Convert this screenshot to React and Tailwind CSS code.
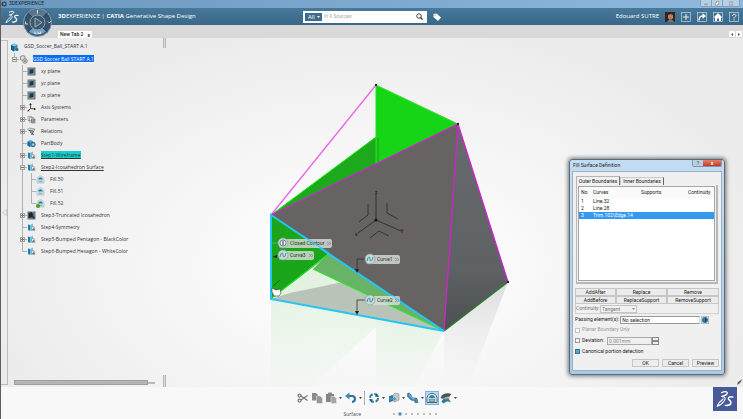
import { useState } from 'react';

const TREE = [
  { label: 'xy plane', icon: 'plane' },
  { label: 'yz plane', icon: 'plane' },
  { label: 'zx plane', icon: 'plane' },
  { label: 'Axis Systems', icon: 'axis', box: '+' },
  { label: 'Parameters', icon: 'params', box: '+' },
  { label: 'Relations', icon: 'relations', box: '+' },
  { label: 'PartBody', icon: 'body' },
  { label: 'Step1-Wireframe', icon: 'set', box: '+', mark: 'bg-[#14cfcb] underline' },
  {
    label: 'Step2-Icosahedron Surface',
    icon: 'set',
    box: '-',
    mark: 'underline',
    children: [
      { label: 'Fill.50', icon: 'fill' },
      { label: 'Fill.51', icon: 'fill' },
      { label: 'Fill.52', icon: 'fillActive' },
    ],
  },
  { label: 'Step3-Truncated Icosahedron', icon: 'setDark', box: '+' },
  { label: 'Step4-Symmetry', icon: 'set' },
  { label: 'Step5-Bumped Pentagon - BlackColor', icon: 'set', box: '+' },
  { label: 'Step6-Bumped Hexagon - WhiteColor', icon: 'set' },
];

const CURVES = [
  { no: 1, name: 'Line.32' },
  { no: 2, name: 'Line.28' },
  { no: 3, name: 'Trim.102\\Edge.14' },
];

const DsLogo = ({ className }) => (
  <svg viewBox="0 0 24 24" className={className} fill="none" stroke="currentColor" strokeLinecap="round" strokeLinejoin="round">
    <path d="M7.500 3.500c4-2 8-1.500 7.500.8-.5 2-4 3.500-7.500 4.200" strokeWidth="1.700" />
    <path d="M9 9c4 0 4 3 1.500 6C8 18.500 4 21 1.500 21.500c1.500-3.500 4.500-7 8-9.500" strokeWidth="1.500" />
    <path d="M22.500 9.500c-3-1-6.500 0-6 2.200.5 2 4 2.800 3.500 5.300-.6 2.600-4 4-7.500 3.500" strokeWidth="2" />
  </svg>
);

const TreeIcon = ({ name }) => (
  <svg viewBox="0 0 18 18" className="size-[9px] shrink-0">
    {(name === 'plane' || name === 'setDark') && (
      <>
        <rect x="1" y="1" width="16" height="16" fill="#6b7378" />
        <rect x="3" y="3" width="12" height="12" fill="#8b959b" />
        <path d="M5 5l8-1v8l-8 2z" fill="#143c50" />
      </>
    )}
    {name === 'setDark' && <path d="M3 4l7-2v10l-7 2zM11 11h4v4h-4z" fill="#20262c" />}
    {name === 'axis' && (
      <>
        <path d="M7 2v9l9 1M7 11l-5 5" fill="none" stroke="#222" strokeWidth="1.600" />
        <path d="M7 0l2.500 4h-5zM18 12l-4 2.500v-5zM1 17l1-4 3 3z" fill="#222" />
      </>
    )}
    {name === 'params' && (
      <>
        <path d="M2 3h8v8H2zM5 5h8v9H5z" fill="#e7e9ea" stroke="#667077" />
        <path d="M9 8h7v8H9z" fill="#a8b5bc" stroke="#4b555b" />
        <path d="M11 14l4-5" stroke="#333" />
      </>
    )}
    {name === 'relations' && (
      <>
        <path d="M1 5l4-3 5 1 6 1-3 5-5 1z" fill="#cfd3d5" stroke="#5a6266" />
        <path d="M4 7l8 1M6 10l8 6M13 9l-4 7" stroke="#2c3337" strokeWidth="1.600" />
      </>
    )}
    {name === 'body' && (
      <>
        <path d="M1 5l5-3 6 2v9l-6 3-5-3z" fill="#46a5c9" />
        <path d="M1 5l5 2v9l-5-3z" fill="#1c6c91" />
        <circle cx="12" cy="11" r="4.500" fill="#56a9c9" stroke="#24485a" strokeWidth="1.500" />
        <circle cx="12" cy="11" r="1.500" fill="#d5e6ee" />
      </>
    )}
    {name === 'set' && (
      <>
        <path d="M2 3l4 1v12l-4-2z" fill="#1f81ad" />
        <path d="M6 4l6-3v4l-3 9-3 2z" fill="#74c0df" />
        <path d="M9 9c1-3 6-3 6 0l1 6H9z" fill="#e4e8ea" stroke="#69757b" />
        <path d="M10 14l3-5 3 5z" fill="#6b7980" />
      </>
    )}
    {(name === 'fill' || name === 'fillActive') && (
      <>
        <path d="M2 16V9c2-10 12-10 14 0v7z" fill="#dfe5e8" stroke="#9aa5ab" />
        <path d="M4 9c3-6 7-6 10 0z" fill="#1f83ae" />
        <path d="M5 11h8v4H5z" fill="#8fbccf" />
      </>
    )}
    {name === 'fillActive' && <circle cx="4" cy="14" r="4" fill="#4b9e23" />}
    {name === 'root' && (
      <>
        <path d="M2 4l6-3 7 3v8l-7 5-6-4z" fill="#2b8db4" />
        <path d="M2 4l6-3 7 3-7 3z" fill="#7ec8e0" />
        <path d="M2 4l6 3v10l-6-4z" fill="#146083" />
        <circle cx="14" cy="13" r="3" fill="#2e6b84" />
      </>
    )}
    {name === 'product' && (
      <g fill="#dcdcdc" stroke="#555" strokeWidth="1.200">
        <path d="M3 3l5-2 4 2v6l-5 2-4-2z" />
        <circle cx="12" cy="12" r="4.500" />
        <circle cx="12" cy="12" r="1.500" />
      </g>
    )}
  </svg>
);

// One cell of the tree guides: vertical line, horizontal stub and expander box
const Branch = ({ box, last, stub = true }) => (
  <svg viewBox="0 0 9 12" className="h-3 w-[9px] shrink-0">
    <path d={last ? 'M4.500 0v6.500' : 'M4.500 0v12'} stroke="#b0b0b0" />
    {stub && <path d="M4.500 6.500H9" stroke="#b0b0b0" />}
    {box && <rect x="2.500" y="4.500" width="4" height="4" fill="#ececec" stroke="#a2a2a2" />}
    {box && <path d={box === '+' ? 'M3 6.500h3M4.500 5v3' : 'M3 6.500h3'} stroke="#777" />}
  </svg>
);

const TreeRow = ({ node, last }) => (
  <li>
    <div className="flex h-3 items-center">
      <Branch box={node.box} last={last} />
      <TreeIcon name={node.icon} />
      <span className={`ml-[5px] leading-[8px] ${node.mark || ''}`}>{node.label}</span>
    </div>
    {node.children && (
      <ul>
        {node.children.map((child, i) => (
          <li key={child.label} className="flex h-3 items-center">
            <Branch stub={false} />
            <Branch last={i === node.children.length - 1} />
            <TreeIcon name={child.icon} />
            <span className="ml-[5px] leading-[8px]">{child.label}</span>
          </li>
        ))}
      </ul>
    )}
  </li>
);

const SpecTree = () => (
  <nav aria-label="Specification tree" className="relative flex-1 pt-[3px] pl-px text-[5px] whitespace-nowrap text-[#333]">
    <div className="flex h-3 items-center">
      <TreeIcon name="root" />
      <span className="ml-[5px]">GSD_Soccer_Ball_START A.1</span>
    </div>
    <div className="flex h-3 items-center">
      <Branch box="-" last />
      <TreeIcon name="product" />
      <span className="ml-[5px] bg-[#0a6cf0] leading-[8px] text-white underline">GSD Soccer Ball START A.1</span>
    </div>
    <ul className="pl-2">
      {TREE.map((node, i) => (
        <TreeRow key={node.label} node={node} last={i === TREE.length - 1} />
      ))}
    </ul>
  </nav>
);

const Tag = ({ x, y, width, label, info }) => (
  <g transform={`translate(${x} ${y})`}>
    <rect x="-4" y="-4" width={width} height="9" rx="2" fill="#d9dedb" fillOpacity=".8" />
    <circle r="5" fill="#c9dcd4" stroke="#8a9a94" strokeWidth=".7" />
    {info ? (
      <>
        <circle r="3" fill="#fff" stroke="#445" strokeWidth=".7" />
        <path d="M0-2V2" stroke="#2b3f8d" strokeWidth="1.200" />
      </>
    ) : (
      <path d="M-3 2c1-5 3-5 3-2s2 3 3-2" fill="none" stroke="#3388a8" />
    )}
    <text x="7" y="2" fontSize="5" fill="#333">{label}</text>
    <path d={`M${width - 7} -1l2 1.500-2 1.500M${width - 9} -1l2 1.500-2 1.500`} fill="none" stroke="#777" strokeWidth=".6" />
  </g>
);

const Scene = () => (
  <svg viewBox="1 38 742 349" className="absolute inset-0 size-full font-['Roboto',sans-serif]">
    <defs>
      <linearGradient id="reflect" x1="0" y1="0" x2="0" y2="1">
        <stop offset="0" stopColor="#cdeccd" stopOpacity=".5" />
        <stop offset="1" stopColor="#dff3df" stopOpacity=".1" />
      </linearGradient>
      <linearGradient id="shade" x1="0" y1="0" x2="0" y2="1">
        <stop offset="0" stopColor="#cfcfd2" stopOpacity=".7" />
        <stop offset="1" stopColor="#e8e8ea" stopOpacity="0" />
      </linearGradient>
      <linearGradient id="side" x1="0" y1="0" x2="0" y2="1">
        <stop offset="0" stopColor="#686a6d" />
        <stop offset=".7" stopColor="#5e6265" />
        <stop offset="1" stopColor="#4c4f51" />
      </linearGradient>
    </defs>

    <path d="M271 299l105 20v8l-65 60H271z" fill="url(#reflect)" />
    <path d="M376 319l68 12-30 56h-38z" fill="url(#reflect)" />
    <path d="M444 331l64-49-40 105h-24z" fill="url(#shade)" />

    <path d="M376 85l82 39-82 40z" fill="#16d416" />
    <path d="M376 137v27l-105 51z" fill="#1ca91c" />
    <path d="M271 215L376 137M376 85v79" stroke="#17e81b" fill="none" />
    <path d="M378 138v24" stroke="#2a8c2a" />
    <path d="M376 85l82 39" stroke="#3adf36" />

    <path d="M271 299L313 269L444 331z" fill="#e2f1e0" />
    <path d="M290 293L343 282L444 331L271 299z" fill="#b9c3b7" />
    <path d="M328 254l-15 15 131 62z" fill="#69b369" />
    <path d="M313 269l131 62" stroke="#2be82b" strokeWidth="1.300" />
    <path d="M271 215v84l57-45z" fill="#1aa51a" />
    <path d="M273 297l55-42" stroke="#18e51c" strokeWidth="1.300" />

    <path d="M271 215L458 124L444 331z" fill="#666362" />
    <path d="M458 124L508 282L444 331z" fill="url(#side)" />
    <path d="M508 282l-64 49" stroke="#267f26" strokeWidth="1.200" />
    <g fill="none" stroke="#ce22ce" strokeWidth="1.300">
      <path d="M376 85L271 215" stroke="#ec66e6" />
      <path d="M271 215l187-91 50 158" />
      <path d="M458 124l-14 207" />
    </g>
    <path d="M271 215v84l173 32z" fill="none" stroke="#25c4f5" strokeWidth="2" />
    <g fill="#222">
      <rect x="375" y="84" width="2" height="2" />
      <rect x="457" y="123" width="2" height="2" />
      <rect x="507" y="281" width="2" height="2" />
    </g>

    <g fill="none" stroke="#272727" strokeWidth=".8">
      <path d="M376 194v26l-18 13M376 220l25 11" />
      <path d="M368 204v11l-9 7M387 203v10l11 6M370 238l9-7 10 5" />
    </g>
    <circle cx="376" cy="220" r="1.500" fill="#111" />
    <g fontSize="5" fill="#111">
      <text x="375" y="194">z</text>
      <text x="355" y="236">x</text>
      <text x="401" y="232">y</text>
    </g>

    <path d="M365 259h-8v12M365 300h-8v13M280 255l-7 2" fill="none" stroke="#333" strokeWidth=".8" />
    <path d="M272 243h7" stroke="#4cc3a8" strokeWidth=".8" />
    <path d="M355 269h4l-2 4zM355 311h4l-2 4zM273 257l4-2v3z" fill="#222" />
    <Tag x={283} y={243} width={53} label="Closed Contour" info />
    <Tag x={283} y={255} width={35} label="Curve3" />
    <Tag x={370} y={259} width={34} label="Curve1" />
    <Tag x={370} y={300} width={34} label="Curve2" />
    <path d="M303 236l26 17M392 295l10 8" stroke="#25c4f5" strokeWidth="1.500" opacity=".6" />
    <path d="M272 288l4 2 4-1 1 4-2 3h-5l-2-4z" fill="#fff" stroke="#333" strokeWidth=".6" />
    <path d="M273 286l7-6" stroke="#164d16" strokeWidth=".7" />
  </svg>
);

const DialogButton = ({ children, className = '' }) => (
  <button type="button" className={`border border-[#c6c6c6] bg-[#ececec] text-center leading-[6px] ${className}`}>
    {children}
  </button>
);

const checkbox =
  "flex size-[5px] appearance-none items-center justify-center border border-[#9a9a9a] bg-white checked:border-[#27799b] checked:bg-[#53a8c8] disabled:border-[#c4c4c4]";

const FillDialog = () => {
  const [tab, setTab] = useState('Outer Boundaries');
  const [selected, setSelected] = useState(3);
  const [canonical, setCanonical] = useState(true);
  const [deviation, setDeviation] = useState(false);

  return (
    <section
      role="dialog"
      aria-labelledby="fill-title"
      className="absolute top-[121px] right-[18px] w-[156px] rounded-[3px] border border-[#5b6a78] bg-gradient-to-b from-[#c3dcf3] to-[#a9cbe9] px-[2px] pb-[3px] font-['Roboto',sans-serif] text-[5px] text-[#222] shadow-[0_0_4px_1px_#0008]"
    >
      <div className="flex h-[11px] items-center justify-between pl-px">
        <h2 id="fill-title">Fill Surface Definition</h2>
        <div className="flex h-[7px] self-start overflow-hidden rounded-b-[2px] border border-t-0 border-[#8496a8] text-[5px] leading-[6px]">
          <button type="button" aria-label="Help" className="w-[10px] bg-[#b9cfe2] text-[#333]">?</button>
          <button type="button" aria-label="Close" className="w-[18px] bg-gradient-to-b from-[#dc8272] to-[#c93219] font-bold text-white">x</button>
        </div>
      </div>

      <div className="border border-[#9fb0bf] bg-[#f0f0f0] px-[2px] pt-1 pb-[3px]">
        <div role="tablist" className="flex h-[9px] items-end pl-px">
          {['Outer Boundaries', 'Inner Boundaries'].map((name) => (
            <button
              key={name}
              type="button"
              role="tab"
              aria-selected={tab === name}
              onClick={() => setTab(name)}
              className={`w-11 border-t border-r border-l text-center leading-[7px] ${tab === name ? 'h-[9px] border-[#b5b5b5] border-r-[#777]' : 'h-[8px] border-[#c9c9c9] border-r-[#666]'}`}
            >
              {name}
            </button>
          ))}
        </div>

        <div className="mx-px border-r-2 border-b-2 border-l border-[#b8b8b8] p-px">
          <div className="h-[95px] border border-[#a5a5a5] bg-white">
            <table className="w-full table-fixed border-collapse text-left">
              <thead>
                <tr className="h-[11px] bg-[#fafafa] leading-[7px]">
                  <th className="w-[14px] pl-[2px] font-normal">No.</th>
                  <th className="w-12 font-normal">Curves</th>
                  <th className="w-[47px] font-normal">Supports</th>
                  <th className="font-normal">Continuity</th>
                </tr>
              </thead>
              <tbody>
                {CURVES.map((c) => (
                  <tr
                    key={c.no}
                    onClick={() => setSelected(c.no)}
                    className={`h-[7px] leading-[7px] ${selected === c.no ? 'bg-[#3399f3] text-white' : ''}`}
                  >
                    <td className="pl-[2px]">{c.no}</td>
                    <td>{c.name}</td>
                    <td />
                    <td />
                  </tr>
                ))}
              </tbody>
            </table>
          </div>
        </div>

        <div className="mt-1 grid grid-cols-[41fr_51fr_52fr]">
          {['AddAfter', 'Replace', 'Remove', 'AddBefore', 'ReplaceSupport', 'RemoveSupport'].map((name) => (
            <DialogButton key={name} className="h-2">{name}</DialogButton>
          ))}
        </div>

        <div className="flex h-[10px] items-center border border-t-0 border-[#cfcfcf] text-[#777]">
          <label htmlFor="continuity" className="w-6">Continuity:</label>
          <div className="relative w-[37px]">
            <select id="continuity" disabled className="block h-2 w-full appearance-none border border-[#c4c4c4] pl-px leading-[6px]">
              <option>Tangent</option>
            </select>
            <svg viewBox="0 0 6 4" className="absolute top-[3px] right-[2px] h-[2px] w-[3px]"><path d="M0 0h6L3 4z" fill="#888" /></svg>
          </div>
        </div>

        <div className="mt-px flex h-[9px] items-center gap-px">
          <label htmlFor="passing" className="whitespace-nowrap">Passing element(s):</label>
          <input id="passing" defaultValue="No selection" className="h-2 w-0 flex-1 border border-[#999] border-r-[#ddd] bg-white pl-px" />
          <button type="button" aria-label="Edit elements" className="mr-[10px] flex size-2 items-center justify-center border border-[#bbb] bg-[#e4e4e4]">
            <svg viewBox="0 0 12 12" className="size-[6px]"><circle cx="6" cy="6" r="6" fill="#2c7ca8" /><path d="M6 1l4 4-4 6z" fill="#173f73" /></svg>
          </button>
        </div>

        <div className="mt-[2px] flex flex-col gap-[2px]">
          <label className="flex h-2 items-center gap-[2px] text-[#9a9a9a]">
            <input type="checkbox" disabled className={checkbox} />
            Planar Boundary Only
          </label>
          <div className="flex h-[9px] items-center">
            <label className="flex w-8 items-center gap-[2px]">
              <input type="checkbox" checked={deviation} onChange={(e) => setDeviation(e.target.checked)} className={checkbox} />
              Deviation:
            </label>
            <input aria-label="Deviation value" disabled defaultValue="0.001mm" className="h-2 w-[45px] border border-[#aaa] pl-px text-[#8c8c8c]" />
            <div className="flex w-[7px] flex-col">
              <button type="button" aria-label="Increase" className="h-1 border border-[#888]" />
              <button type="button" aria-label="Decrease" className="h-1 border border-[#888]" />
            </div>
          </div>
          <label className="flex h-[9px] items-center gap-[2px]">
            <input type="checkbox" checked={canonical} onChange={(e) => setCanonical(e.target.checked)} className={checkbox} />
            Canonical portion detection
          </label>
        </div>

        <div className="mt-[3px] flex justify-end gap-[3px]">
          <DialogButton className="h-2 w-[27px] border-[#7d7d7d]">OK</DialogButton>
          <DialogButton className="h-2 w-[27px]">Cancel</DialogButton>
          <DialogButton className="h-2 w-[27px]">Preview</DialogButton>
        </div>
      </div>
    </section>
  );
};

const HeaderButton = ({ label, children }) => (
  <button type="button" aria-label={label} className="size-[10px]">
    <svg viewBox="0 0 20 20" className="size-full" fill="none" stroke="#e8f1f6" strokeWidth="2">
      <rect x="1" y="1" width="18" height="18" strokeWidth="1.500" stroke="#b7cfdc" />
      {children}
    </svg>
  </button>
);

const Header = () => (
  <header className="flex h-[17px] items-center bg-gradient-to-b from-[#47799b] to-[#396787] px-[4px] text-white">
    <div className="flex flex-1 items-center">
      <DsLogo className="size-[14px]" />
      <button type="button" aria-label="Compass" className="relative z-10 -mb-[12px] ml-1 size-[29px]">
        <svg viewBox="0 0 58 58" className="size-full">
          <circle cx="29" cy="29" r="28" fill="#35536c" stroke="#8ba1b2" strokeWidth="2" />
          <path d="M10 10a27 27 0 0 1 38 0L38 20a13 13 0 0 0-18 0z" fill="#57758c" />
          <path d="M12 47a26 26 0 0 0 34 0l-9-9a13 13 0 0 1-16 0z" fill="#73a2c5" />
          <path d="M9 10l40 38M49 10L9 48" stroke="#243d52" strokeWidth="2" />
          <circle cx="29" cy="29" r="15" fill="#3b586f" stroke="#93a7b5" strokeWidth="2" />
          <path d="M24 20l14 9-14 9z" fill="#486478" stroke="#b9c8d2" strokeWidth="1.500" />
          <path d="M29 4v7M5 27v5h5M50 27l3 3 3-4M24 47v4h3M30 47v4h5v-4" stroke="#dbe6ed" strokeWidth="2" fill="none" />
        </svg>
      </button>
      <h1 className="ml-[6px] text-[6px] whitespace-nowrap">
        <b>3D</b>EXPERIENCE | <b>CATIA</b> Generative Shape Design
      </h1>
    </div>

    <form className="flex items-center gap-[6px]" onSubmit={(e) => e.preventDefault()}>
      <div className="flex h-3 w-[124px] items-center bg-white px-[2px]">
        <div className="relative">
          <select aria-label="Search in" className="block h-2 w-[17px] appearance-none bg-[#3d6d8d] pl-[3px] text-[6px] leading-[8px] text-white">
            <option>All</option>
          </select>
          <svg viewBox="0 0 6 4" className="absolute top-[3px] right-[2px] h-[2px] w-[3px]"><path d="M0 0h6L3 4z" fill="#fff" /></svg>
        </div>
        <input aria-label="Search" placeholder="In 9 Sources" className="ml-[2px] w-0 flex-1 font-['Roboto',sans-serif] text-[5px] text-gray-700 outline-none placeholder:text-[#a5a5a5]" />
        <button type="submit" aria-label="Search" className="mr-[2px] size-[7px] text-[#444]">
          <svg viewBox="0 0 14 14" fill="none" stroke="currentColor" strokeWidth="2"><circle cx="6" cy="6" r="4.500" /><path d="M9 9l4 4" strokeWidth="3" /></svg>
        </button>
      </div>
      <button type="button" aria-label="Tags" className="size-[8px]">
        <svg viewBox="0 0 16 16"><path d="M1 2l6-1 9 8-6 7-9-8z" fill="#fff" /><circle cx="4" cy="4" r="1.200" fill="#3d6d8d" /></svg>
      </button>
    </form>

    <div className="flex flex-1 items-center justify-end gap-[6px]">
      <span className="text-[6px]">Edouard SUTRE</span>
      <button type="button" aria-label="Profile" className="size-[10px]">
        <svg viewBox="0 0 20 20">
          <path d="M0 0h20v20H0z" fill="#35251f" />
          <ellipse cx="11" cy="9" rx="5" ry="6.500" fill="#c98d75" />
          <path d="M5 6c1-6 11-5 12 0-5-2-8-2-12 0z" fill="#2a1b17" />
          <path d="M4 20c2-6 12-6 14 0z" fill="#83726d" />
          <path d="M8 8h2M12 8h2M9 12h4" stroke="#5f3027" />
        </svg>
      </button>
      <HeaderButton label="Add"><path d="M10 4v12M4 10h12" /></HeaderButton>
      <HeaderButton label="Share"><path d="M4 17c0-7 2-9 8-9" strokeWidth="3" /><path d="M11 2l7 6-7 6z" fill="#fff" stroke="none" /></HeaderButton>
      <HeaderButton label="Home"><path d="M10 2l9 9h-3v7h-4v-5H8v5H4v-7H1z" fill="#fff" stroke="none" /></HeaderButton>
      <HeaderButton label="Help"><path d="M7 8c0-5 7-4 7-1 0 2-4 2-4 6M10 14.500V17" /></HeaderButton>
    </div>
  </header>
);

const Caret = () => (
  <svg viewBox="0 0 6 4" className="ml-px h-[2px] w-[3px]"><path d="M0 0h6L3 4z" fill="#444" /></svg>
);

const Tool = ({ label, active, children }) => (
  <button
    type="button"
    aria-label={label}
    className={`flex size-[14px] items-center justify-center ${active ? 'border border-[#78b2e8] bg-[#b9dcf8]' : ''}`}
  >
    <svg viewBox="0 0 24 24" className="size-3">{children}</svg>
  </button>
);

const ActionBar = () => (
  <footer className="flex h-8 items-start bg-[#f8f8f8]">
    <div className="flex-1" />
    <div className="mt-1 pl-2 text-[5px] text-[#444]">
      <div role="toolbar" aria-label="Surface" className="flex items-center">
        <Tool label="Cut">
          <g fill="none" stroke="#777" strokeWidth="2.500"><circle cx="5" cy="7" r="3" /><circle cx="5" cy="17" r="3" /><path d="M8 8l13 9M8 16l13-9" /></g>
        </Tool>
        <Tool label="Copy">
          <path d="M2 2h8l4 4v11H2z" fill="#8b8b8b" /><path d="M11 8h7l5 4v11H11z" fill="#999" stroke="#eee" />
        </Tool>
        <div className="flex items-center">
          <Tool label="Paste"><path d="M2 4h4l1-3h6l1 3h4v16H2z" fill="#858585" /><path d="M12 9h7l4 4v10H12z" fill="#a5a5a5" stroke="#eee" /></Tool>
          <Caret />
        </div>
        <div className="ml-[2px] flex items-center">
          <Tool label="Undo"><path d="M6 8h8c8 0 8 11 0 12" fill="none" stroke="#2d7195" strokeWidth="4" /><path d="M0 8l9-7v14z" fill="#3c8ab0" /></Tool>
          <Caret />
        </div>
        <div className="ml-[2px] h-[14px] w-px bg-[#aaa]" />
        <div className="ml-[2px] flex items-center">
          <Tool label="Update"><circle cx="12" cy="12" r="8" fill="none" stroke="#347d9f" strokeWidth="4" strokeDasharray="9 3.500" /><path d="M17 3l5 7-8-1zM7 21l-5-7 8 1z" fill="#25627f" /></Tool>
          <Caret />
        </div>
        <div className="ml-[2px] flex items-center">
          <Tool label="Extrude"><path d="M2 8l8-2v12l-8 3z" fill="#2e7b9d" /><path d="M10 6l4-4 8 2v12l-8 4-4-2z" fill="#c3cbd0" stroke="#6f7b81" /><path d="M4 12h8l0-3 5 5-5 4v-3H4z" fill="#4aa0c4" /></Tool>
          <Caret />
        </div>
        <div className="ml-px flex items-center">
          <Tool label="Sweep"><path d="M1 3c5-3 7 3 9 7s8 0 10 3l2 8-5 1-3-5C6 18 5 11 1 9z" fill="#3d88ae" stroke="#285f7e" /><path d="M4 5c4 2 4 9 11 9" stroke="#9fcde1" fill="none" strokeWidth="2" /></Tool>
          <Caret />
        </div>
        <div className="ml-px flex items-center">
          <Tool label="Fill" active><path d="M2 21V11c2-11 18-11 20 0v10z" fill="#e8eff3" stroke="#4c6674" strokeWidth="2" /><path d="M5 12c3-8 11-8 14 0z" fill="#2f82aa" /><path d="M6 14h12v5H6z" fill="#88b7cb" stroke="#49606c" /></Tool>
          <Tool label="Blend"><path d="M1 12C4 3 14 1 23 4l-5 6c-5-1-8 0-10 5z" fill="#4a5357" /><path d="M3 20c1-6 8-10 14-7l5 8c-5-3-10-3-14 2z" fill="#32799b" /><path d="M2 13l10-3 9 2-9 3z" fill="#879ba5" /></Tool>
          <Caret />
        </div>
      </div>
      <div className="mt-[5px] flex items-center gap-8 pl-12 leading-[8px]">
        <span>Surface</span>
        <div className="flex gap-1">
          {[0, 1, 2, 3, 4, 5, 6, 7].map((i) => (
            <button key={i} type="button" aria-label={`Page ${i + 1}`} className={`size-[2px] rounded-full ${i === 1 ? 'bg-[#2f7da4] ring-1 ring-[#2f7da4]/50' : 'bg-[#aaa]'}`} />
          ))}
        </div>
      </div>
    </div>
    <div className="flex flex-1 justify-end">
      <div className="mr-[6px] bg-[#47599b] p-[3px] text-white"><DsLogo className="size-[18px]" /></div>
    </div>
  </footer>
);

export default function App() {
  return (
    <div className="flex min-h-screen flex-col overflow-hidden border-l border-[#5d5d5d] bg-[#efefef] font-['Open_Sans','Noto_Sans',sans-serif]">
      <div className="flex h-2 items-center justify-between bg-gradient-to-r from-[#6a98bf] to-[#91b9df] text-[5px] text-[#1d2b38]">
        <div className="flex items-center gap-[2px]">
          <svg viewBox="0 0 12 12" className="size-[6px]"><circle cx="6" cy="6" r="5" fill="#243f5c" /><path d="M5 3l4 3-4 3z" fill="#aac8e2" /></svg>
          <span className="font-['Roboto',sans-serif]">3DEXPERIENCE</span>
        </div>
        <div className="mr-[3px] flex h-[7px] self-start rounded-b-[2px] border border-t-0 border-[#829fba] bg-[#b7cfe4]">
          {[
            ['Minimize', 'M4 7h6v2H4z', 'w-[11px]'],
            ['Restore', 'M6 1h5v6H9v3H3V4h3z', 'w-[11px]'],
            ['Close', 'M3 2h3l1 2 1-2h3L9 6l2 4H8L7 8l-1 2H3l2-4z', 'w-[16px]'],
          ].map(([name, d, width]) => (
            <button key={name} type="button" aria-label={name} className={`flex items-center justify-center border-r border-[#829fba] last:border-r-0 ${width}`}>
              <svg viewBox="0 0 14 12" className="h-[5px] w-[6px]"><path d={d} fill="#f6f6f6" stroke="#555" /></svg>
            </button>
          ))}
        </div>
      </div>

      <Header />

      <div className="flex h-[13px] items-end justify-between bg-[#d9d9d9] pl-[57px]">
        <div className="flex h-[7px] items-center gap-1 bg-white px-[2px] font-['Roboto',sans-serif] text-[5px] font-medium text-[#222]">
          <span>New Tab 2</span>
          <button type="button" aria-label="Close tab" className="leading-[6px] font-bold">x</button>
        </div>
        <div className="mr-px mb-px flex gap-px">
          <button type="button" aria-label="Previous tab" className="flex size-[6px] items-center justify-center bg-white"><svg viewBox="0 0 4 6" className="h-[3px] w-[2px]"><path d="M4 0v6L0 3z" fill="#555" /></svg></button>
          <button type="button" aria-label="Next tab" className="flex size-[6px] items-center justify-center bg-white"><svg viewBox="0 0 4 6" className="h-[3px] w-[2px]"><path d="M0 0v6l4-3z" fill="#555" /></svg></button>
        </div>
      </div>

      <main className="relative flex flex-1 bg-[radial-gradient(ellipse_at_50%_65%,#ffffff_0%,#fafafa_25%,#ececec_75%)]">
        <Scene />
        <div className="relative my-[2px] flex w-[7px] items-center justify-center border-y border-r border-[#bdbdbd]">
          <button type="button" aria-label="Collapse panel" className="text-[#aaa]">
            <svg viewBox="0 0 10 14" className="h-[7px] w-[5px]" fill="none" stroke="currentColor"><path d="M9 1v12L1 7z" /></svg>
          </button>
        </div>
        <div className="relative flex w-[155px] flex-col pl-px">
          <SpecTree />
          <div className="mb-[2px] ml-[5px] flex items-center">
            <div className="h-[5px] w-[134px] border border-[#a0a0a0] bg-[#b5b5b5]" />
            <div className="h-[2px] w-[7px] bg-[#b9b9b9]" />
          </div>
        </div>
        <div className="relative flex flex-col justify-between">
          <div className="h-[10px] w-[3px] border-x border-[#b5b5b5] bg-[#ddd]" />
          <div className="h-3 w-[3px] border-x border-[#b5b5b5] bg-[#ddd]" />
        </div>
        <FillDialog />
        <svg viewBox="0 0 12 12" className="absolute right-0 bottom-[2px] size-[6px]"><path d="M0 12l2-6 9-6-5 8z" fill="#555" /></svg>
      </main>

      <ActionBar />
    </div>
  );
}
